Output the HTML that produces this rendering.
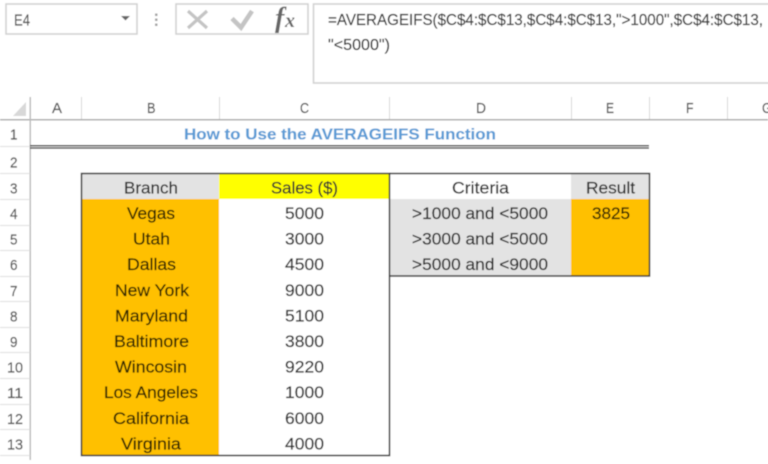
<!DOCTYPE html>
<html lang="en">
<head>
<meta charset="utf-8">
<title>AVERAGEIFS</title>
<style>
html,body{margin:0;padding:0;background:#fff;width:768px;height:464px;overflow:hidden}
svg{display:block}
text{font-family:"Liberation Sans",sans-serif;font-size:17px;fill:#2e2e2e;stroke:#2e2e2e;stroke-width:.22px}
.h text{font-size:15px;fill:#555;stroke:#555}
.o text{fill:#2f2600;stroke:#2f2600}
.f{font-size:16px;fill:#3a3a3a;stroke:#3a3a3a}
.t{font-weight:bold;font-size:16px;fill:#5b9bd5;stroke:#5b9bd5;stroke-width:.1px}
</style>
</head>
<body>
<svg width="768" height="464" viewBox="0 0 768 464" xmlns="http://www.w3.org/2000/svg">
<defs><filter id="b" x="0" y="0" width="100%" height="100%"><feGaussianBlur stdDeviation="0.42"/></filter></defs>
<g filter="url(#b)">
<rect width="768" height="464" fill="#fff"/>
<!-- toolbar -->
<rect x="6" y="4" width="131" height="30" fill="#fff" stroke="#d2d2d2" stroke-width="1.6"/>
<text x="14" y="25.500" textLength="16" lengthAdjust="spacingAndGlyphs" class="f" style="fill:#555;stroke:#555">E4</text>
<path d="M121 16h9l-4.500 4.500z" fill="#666"/>
<g fill="#a5a5a5"><rect x="155" y="13.500" width="2.500" height="2.500"/><rect x="155" y="18.500" width="2.500" height="2.500"/><rect x="155" y="23.500" width="2.500" height="2.500"/></g>
<rect x="176" y="4" width="132" height="30" fill="#fff" stroke="#d2d2d2" stroke-width="1.600"/>
<path d="M188 11L207 28M207 11L188 28" stroke="#c4c4c4" stroke-width="3.200" fill="none"/>
<path d="M232 18.500L241 27.500L252 11" stroke="#c4c4c4" stroke-width="4.600" fill="none"/>
<text x="275" y="27" style="font-family:'Liberation Serif',serif;font-style:italic;font-weight:bold;font-size:28px;fill:#666;stroke:none">f</text>
<text x="285" y="27" style="font-family:'Liberation Serif',serif;font-style:italic;font-weight:bold;font-size:20px;fill:#666;stroke:none">x</text>
<rect x="313.500" y="4" width="470" height="79" fill="#fff" stroke="#d2d2d2" stroke-width="1.600"/>
<text x="328" y="25" textLength="435" lengthAdjust="spacingAndGlyphs" class="f">=AVERAGEIFS($C$4:$C$13,$C$4:$C$13,"&gt;1000",$C$4:$C$13,</text>
<text x="328" y="50" textLength="62" lengthAdjust="spacingAndGlyphs" class="f">"&lt;5000")</text>

<!-- column header -->
<path d="M26 102V116H13z" fill="#d8d8d8"/>
<g stroke="#d8d8d8" stroke-width="1"><path d="M30.500 97V119M81.500 97V119M219.500 97V119M389.500 97V119M571.500 97V119M649.500 97V119M727.500 97V119"/></g>
<rect x="0" y="119" width="768" height="1.500" fill="#adadad"/>
<g class="h">
<text x="52" y="113" textLength="10" lengthAdjust="spacingAndGlyphs">A</text>
<text x="147" y="113" textLength="8.500" lengthAdjust="spacingAndGlyphs">B</text>
<text x="300" y="113" textLength="9" lengthAdjust="spacingAndGlyphs">C</text>
<text x="476" y="113" textLength="10" lengthAdjust="spacingAndGlyphs">D</text>
<text x="606" y="113" textLength="8" lengthAdjust="spacingAndGlyphs">E</text>
<text x="686" y="113" textLength="7.500" lengthAdjust="spacingAndGlyphs">F</text>
<text x="762" y="113" textLength="10" lengthAdjust="spacingAndGlyphs">G</text>
</g>

<!-- row header -->
<rect x="29.500" y="97" width="1.500" height="363" fill="#bcbcbc"/>
<g stroke="#dedede" stroke-width="1"><path d="M0 146.500H30M0 173.500H30M0 199.500H30M0 225.500H30M0 250.500H30M0 276.500H30M0 301.500H30M0 327.500H30M0 352.500H30M0 378.500H30M0 404.500H30M0 429.500H30M0 455.500H30"/></g>
<g class="h">
<text x="10" y="139.500" textLength="7.500" lengthAdjust="spacingAndGlyphs">1</text><text x="10" y="167.500" textLength="7.500" lengthAdjust="spacingAndGlyphs">2</text><text x="10" y="193.500" textLength="7.500" lengthAdjust="spacingAndGlyphs">3</text><text x="10" y="219" textLength="7.500" lengthAdjust="spacingAndGlyphs">4</text><text x="10" y="244.600" textLength="7.500" lengthAdjust="spacingAndGlyphs">5</text><text x="10" y="270.200" textLength="7.500" lengthAdjust="spacingAndGlyphs">6</text><text x="10" y="295.800" textLength="7.500" lengthAdjust="spacingAndGlyphs">7</text><text x="10" y="321.400" textLength="7.500" lengthAdjust="spacingAndGlyphs">8</text><text x="10" y="347" textLength="7.500" lengthAdjust="spacingAndGlyphs">9</text>
<text x="7" y="372.600" textLength="16" lengthAdjust="spacingAndGlyphs">10</text><text x="7" y="398.200" textLength="16" lengthAdjust="spacingAndGlyphs">11</text><text x="7" y="423.800" textLength="16" lengthAdjust="spacingAndGlyphs">12</text><text x="7" y="449.400" textLength="16" lengthAdjust="spacingAndGlyphs">13</text>
</g>

<!-- title -->
<text x="184" y="139.500" textLength="312" lengthAdjust="spacingAndGlyphs" class="t">How to Use the AVERAGEIFS Function</text>
<rect x="30" y="145" width="619" height="1.400" fill="#3c3c3c"/>
<rect x="30" y="147.300" width="619" height="1.400" fill="#3c3c3c"/>

<!-- fills -->
<rect x="82" y="174" width="137" height="25" fill="#e3e3e3"/>
<rect x="219" y="174" width="170" height="25" fill="#ffff00"/>
<rect x="82" y="199" width="137" height="256" fill="#ffc000"/>
<rect x="390" y="199" width="181" height="77" fill="#e3e3e3"/>
<rect x="571" y="174" width="78" height="25" fill="#e3e3e3"/>
<rect x="571" y="199" width="78" height="77" fill="#ffc000"/>

<!-- borders -->
<g fill="none" stroke="#333" stroke-width="1.500">
<rect x="81.500" y="173.500" width="308" height="282"/>
<path d="M389.500 173.500H649.500V276H389.500"/>
</g>

<!-- table text -->
<g transform="translate(0,-0.600)">
<text x="124" y="194" textLength="54" lengthAdjust="spacingAndGlyphs">Branch</text>
<text x="271" y="194" textLength="67" lengthAdjust="spacingAndGlyphs">Sales ($)</text>
<text x="452" y="194" textLength="57" lengthAdjust="spacingAndGlyphs">Criteria</text>
<text x="586" y="194" textLength="49" lengthAdjust="spacingAndGlyphs">Result</text>
<g class="o">
<text x="127" y="219.600" textLength="48" lengthAdjust="spacingAndGlyphs">Vegas</text>
<text x="133" y="245.200" textLength="37" lengthAdjust="spacingAndGlyphs">Utah</text>
<text x="127" y="270.800" textLength="49" lengthAdjust="spacingAndGlyphs">Dallas</text>
<text x="115" y="296.400" textLength="74" lengthAdjust="spacingAndGlyphs">New York</text>
<text x="115" y="322" textLength="73" lengthAdjust="spacingAndGlyphs">Maryland</text>
<text x="114" y="347.600" textLength="75" lengthAdjust="spacingAndGlyphs">Baltimore</text>
<text x="115" y="373.200" textLength="72" lengthAdjust="spacingAndGlyphs">Wincosin</text>
<text x="104" y="398.800" textLength="94" lengthAdjust="spacingAndGlyphs">Los Angeles</text>
<text x="113" y="424.400" textLength="76" lengthAdjust="spacingAndGlyphs">California</text>
<text x="121" y="450" textLength="60" lengthAdjust="spacingAndGlyphs">Virginia</text>
<text x="592" y="219.600" textLength="38" lengthAdjust="spacingAndGlyphs">3825</text>
</g>
<g>
<text x="285" y="219.600" textLength="39" lengthAdjust="spacingAndGlyphs">5000</text>
<text x="285" y="245.200" textLength="39" lengthAdjust="spacingAndGlyphs">3000</text>
<text x="285" y="270.800" textLength="39" lengthAdjust="spacingAndGlyphs">4500</text>
<text x="285" y="296.400" textLength="39" lengthAdjust="spacingAndGlyphs">9000</text>
<text x="285" y="322" textLength="39" lengthAdjust="spacingAndGlyphs">5100</text>
<text x="285" y="347.600" textLength="39" lengthAdjust="spacingAndGlyphs">3800</text>
<text x="285" y="373.200" textLength="39" lengthAdjust="spacingAndGlyphs">9220</text>
<text x="285" y="398.800" textLength="39" lengthAdjust="spacingAndGlyphs">1000</text>
<text x="285" y="424.400" textLength="39" lengthAdjust="spacingAndGlyphs">6000</text>
<text x="285" y="450" textLength="39" lengthAdjust="spacingAndGlyphs">4000</text>
<text x="412" y="219.600" textLength="136" lengthAdjust="spacingAndGlyphs">&gt;1000 and &lt;5000</text>
<text x="412" y="245.200" textLength="136" lengthAdjust="spacingAndGlyphs">&gt;3000 and &lt;5000</text>
<text x="412" y="270.800" textLength="136" lengthAdjust="spacingAndGlyphs">&gt;5000 and &lt;9000</text>
</g>
</g>
</g>
</svg>
</body>
</html>
